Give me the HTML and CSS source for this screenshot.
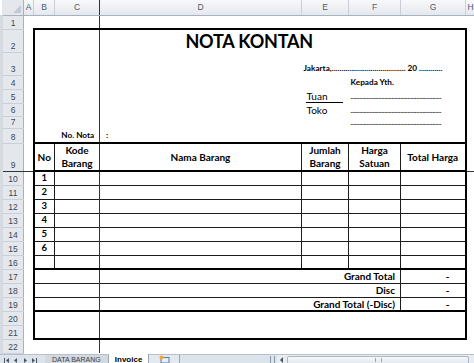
FILE: index.html
```html
<!DOCTYPE html>
<html lang="id">
<head>
  <meta charset="UTF-8" />
  <title>Invoice - Nota Kontan</title>
  <link rel="stylesheet" href="styles.css">
</head>
<body>
  <table class="sheet">
    <colgroup>
      <col class="c-rh"><col class="c-a"><col class="c-b"><col class="c-c"><col class="c-d">
      <col class="c-e"><col class="c-f"><col class="c-g"><col class="c-h">
    </colgroup>
    <tr class="r-head">
      <th class="corner"><span class="tri"></span></th>
      <th class="ch">A</th><th class="ch">B</th><th class="ch fz">C</th><th class="ch">D</th>
      <th class="ch">E</th><th class="ch">F</th><th class="ch">G</th><th class="ch">H</th>
    </tr>
    <tr class="r14">
      <th class="rn">1</th><td></td><td></td><td class="fz"></td><td></td><td></td><td></td><td></td><td></td>
    </tr>
    <tr class="r23 top-thick">
      <th class="rn">2</th><td></td><td class="t lft"></td><td class="t fz"></td>
      <td class="t rgt title" colspan="4">NOTA KONTAN</td><td></td>
    </tr>
    <tr class="r23">
      <th class="rn">3</th><td></td><td class="lft"></td><td class="fz"></td><td></td>
      <td class="rgt small" colspan="3">Jakarta,...................................... 20 ............</td><td></td>
    </tr>
    <tr class="r14">
      <th class="rn">4</th><td></td><td class="lft"></td><td class="fz"></td><td></td><td></td>
      <td class="rgt small kepada" colspan="2">Kepada Yth.</td><td></td>
    </tr>
    <tr class="r14">
      <th class="rn">5</th><td></td><td class="lft"></td><td class="fz"></td><td></td>
      <td class="field"><span class="under">Tuan</span></td>
      <td class="rgt leader" colspan="2">..............................................................</td><td></td>
    </tr>
    <tr class="r13">
      <th class="rn">6</th><td></td><td class="lft"></td><td class="fz"></td><td></td>
      <td class="field"><span class="plain">Toko</span></td>
      <td class="rgt leader" colspan="2">..............................................................</td><td></td>
    </tr>
    <tr class="r11">
      <th class="rn">7</th><td></td><td class="lft"></td><td class="fz"></td><td></td><td></td>
      <td class="rgt leader" colspan="2">..............................................................</td><td></td>
    </tr>
    <tr class="r15">
      <th class="rn">8</th><td></td><td class="lft"></td><td class="fz small nota">No. Nota</td>
      <td class="small colon">:</td><td></td><td></td><td class="rgt"></td><td></td>
    </tr>
    <tr class="r28 top-thick head-row">
      <th class="rn">9</th><td></td>
      <td class="t lft v hd">No</td>
      <td class="t fz hd">Kode<br>Barang</td>
      <td class="t v hd">Nama Barang</td>
      <td class="t v hd">Jumlah<br>Barang</td>
      <td class="t v hd">Harga<br>Satuan</td>
      <td class="t rgt hd">Total Harga</td><td></td>
    </tr>
    <tr class="r14">
      <th class="rn">10</th><td></td><td class="t lft v num">1</td><td class="t fz"></td>
      <td class="t v"></td><td class="t v"></td><td class="t v"></td><td class="t rgt"></td><td></td>
    </tr>
    <tr class="r14 top-thin">
      <th class="rn">11</th><td></td><td class="t lft v num">2</td><td class="t fz"></td>
      <td class="t v"></td><td class="t v"></td><td class="t v"></td><td class="t rgt"></td><td></td>
    </tr>
    <tr class="r14 top-thin">
      <th class="rn">12</th><td></td><td class="t lft v num">3</td><td class="t fz"></td>
      <td class="t v"></td><td class="t v"></td><td class="t v"></td><td class="t rgt"></td><td></td>
    </tr>
    <tr class="r14 top-thin">
      <th class="rn">13</th><td></td><td class="t lft v num">4</td><td class="t fz"></td>
      <td class="t v"></td><td class="t v"></td><td class="t v"></td><td class="t rgt"></td><td></td>
    </tr>
    <tr class="r14 top-thin">
      <th class="rn">14</th><td></td><td class="t lft v num">5</td><td class="t fz"></td>
      <td class="t v"></td><td class="t v"></td><td class="t v"></td><td class="t rgt"></td><td></td>
    </tr>
    <tr class="r14 top-thin">
      <th class="rn">15</th><td></td><td class="t lft v num">6</td><td class="t fz"></td>
      <td class="t v"></td><td class="t v"></td><td class="t v"></td><td class="t rgt"></td><td></td>
    </tr>
    <tr class="r14 top-thin">
      <th class="rn">16</th><td></td><td class="t lft v"></td><td class="t fz"></td>
      <td class="t v"></td><td class="t v"></td><td class="t v"></td><td class="t rgt"></td><td></td>
    </tr>
    <tr class="r14 top-thick">
      <th class="rn">17</th><td></td><td class="t lft"></td><td class="t fz"></td>
      <td class="t v lbl" colspan="3">Grand Total</td><td class="t rgt dash">-</td><td></td>
    </tr>
    <tr class="r14 top-thin">
      <th class="rn">18</th><td></td><td class="t lft"></td><td class="t fz"></td>
      <td class="t v lbl" colspan="3">Disc</td><td class="t rgt dash">-</td><td></td>
    </tr>
    <tr class="r14 top-thin">
      <th class="rn">19</th><td></td><td class="t lft"></td><td class="t fz"></td>
      <td class="t v lbl" colspan="3">Grand Total (-Disc)</td><td class="t rgt dash">-</td><td></td>
    </tr>
    <tr class="r14 top-thick">
      <th class="rn">20</th><td></td><td class="t lft"></td><td class="t fz"></td>
      <td class="t rgt" colspan="4"></td><td></td>
    </tr>
    <tr class="r14 bottom-thick">
      <th class="rn">21</th><td></td><td class="t lft"></td><td class="t fz"></td>
      <td class="t rgt" colspan="4"></td><td></td>
    </tr>
    <tr class="r14">
      <th class="rn">22</th><td></td><td></td><td class="fz"></td><td></td><td></td><td></td><td></td><td></td>
    </tr>
  </table>

  <div class="tabbar">
    <div class="nav">
      <svg width="38" height="9" viewBox="0 0 38 9">
        <g fill="#4a5566">
          <rect x="1" y="2" width="1" height="5"/>
          <path d="M6 2 L3 4.5 L6 7 Z"/>
          <path d="M14 2 L11 4.5 L14 7 Z"/>
          <path d="M21 2 L24 4.5 L21 7 Z"/>
          <path d="M29 2 L32 4.5 L29 7 Z"/>
          <rect x="33" y="2" width="1" height="5"/>
        </g>
      </svg>
    </div>
    <div class="tab">DATA BARANG</div>
    <div class="tab active">Invoice</div>
    <div class="tab newtab">
      <svg width="14" height="9" viewBox="0 0 14 9">
        <rect x="4" y="2.5" width="8" height="5.5" fill="#e8eef7" stroke="#5b7aa6" stroke-width="1"/>
        <circle cx="4.5" cy="2.5" r="2" fill="#f0a830"/>
      </svg>
    </div>
    <div class="gap"></div>
    <div class="split"></div>
    <div class="hscroll">
      <span class="arrow"></span>
      <div class="thumb"><span class="grip"></span></div>
    </div>
  </div>
</body>
</html>
```

FILE: styles.css
```css
body {
  margin: 0;
  background-color: #fff;
  font-family: Lato, 'Liberation Sans', sans-serif;
  color: #000;
  overflow: hidden;
}

.sheet {
  border-collapse: collapse;
  table-layout: fixed;
  width: 474px;
}
.sheet td,
.sheet th {
  padding: 0;
  overflow: hidden;
  white-space: nowrap;
  vertical-align: bottom;
  line-height: 10px;
}
.c-rh { width: 22px; }
.c-a { width: 10px; }
.c-b { width: 21px; }
.c-c { width: 45px; }
.c-d { width: 202px; }
.c-e { width: 47px; }
.c-f { width: 52px; }
.c-g { width: 65px; }
.c-h { width: 10px; }

.r-head { height: 15px; }
.r11 { height: 11px; }
.r13 { height: 13px; }
.r14 { height: 14px; }
.r15 { height: 15px; }
.r23 { height: 23px; }
.r28 { height: 28px; }

/* column + row headers */
.ch {
  background: linear-gradient(#f7f8fa, #e4e8ed);
  border-right: 1px solid #c8cfd8;
  border-bottom: 1px solid #a7b2c0;
  color: #4d5a6a;
  font-family: 'Liberation Sans', sans-serif;
  font-weight: normal;
  font-size: 8.5px;
  vertical-align: middle !important;
}
.corner {
  background: #e4e8ed;
  border-right: 1px solid #a7b2c0;
  border-bottom: 1px solid #a7b2c0;
  position: relative;
}
.tri {
  position: absolute;
  right: 2px;
  bottom: 2px;
  border-left: 8px solid transparent;
  border-bottom: 8px solid #c3cad3;
}
.sheet th.rn {
  background: #e4e8ed;
  border-left: 3px solid #d5dae1;
  border-right: 1px solid #a7b2c0;
  border-bottom: 1px solid #c8cfd8;
  color: #3c4654;
  font-family: 'Liberation Sans', sans-serif;
  font-weight: normal;
  font-size: 8.5px;
  padding-bottom: 1px;
}

/* frozen pane line */
.sheet .fz { border-right: 1px solid #333; }
.head-row th.rn,
.head-row td { border-bottom: 1px solid #333; }

/* invoice borders */
.sheet td.lft { border-left: 2px solid #000; }
.sheet td.rgt { border-right: 2px solid #000; }
.sheet td.v { border-right: 1px solid #1c1c1c; }
.top-thick td.t { border-top: 2px solid #000; }
.top-thin td.t { border-top: 1px solid #1c1c1c; }
.head-row td.t { border-bottom: 2px solid #000; }
.bottom-thick td.t { border-bottom: 2px solid #000; }

/* texts */
.title {
  text-align: center;
  padding-right: 66px !important;
  font-size: 18px;
  font-weight: bold;
  letter-spacing: -0.2px;
  line-height: 20px !important;
  vertical-align: middle !important;
}
.small {
  font-size: 8.2px;
  font-weight: bold;
  padding-left: 2px !important;
  padding-bottom: 2px !important;
}
.kepada { padding-left: 2px !important; }
.field {
  font-size: 10px;
  line-height: 11px !important;
}
.under {
  display: block;
  margin: 0 6px 0 4px;
  padding-left: 1px;
  border-bottom: 1px solid #000;
}
.plain {
  display: block;
  padding-left: 5px;
}
.leader {
  font-size: 7px;
  font-weight: bold;
  letter-spacing: -0.2px;
  padding-left: 2px !important;
  color: #222;
  vertical-align: middle !important;
}
.nota {
  text-align: center;
  padding-bottom: 2px !important;
}
.colon { padding-left: 6px !important; }
.hd {
  text-align: center;
  vertical-align: middle !important;
  font-size: 10px;
  font-weight: bold;
  line-height: 13px !important;
}
.num {
  text-align: center;
  vertical-align: middle !important;
  font-size: 9.5px;
  font-weight: bold;
}
.lbl {
  text-align: right;
  padding-right: 5px !important;
  font-size: 10px;
  font-weight: bold;
  vertical-align: middle !important;
}
.dash {
  text-align: right;
  padding-right: 15px !important;
  font-size: 10px;
  font-weight: bold;
  vertical-align: middle !important;
}

/* sheet tabs + scroll bar */
.tabbar {
  display: flex;
  align-items: stretch;
  height: 11px;
  background: #dde3ea;
  border-top: 1px solid #b7c1cd;
  font-family: 'Liberation Sans', sans-serif;
}
.nav {
  width: 42px;
  padding-left: 3px;
  display: flex;
  align-items: center;
}
.tab {
  display: flex;
  align-items: center;
  padding: 0 7px;
  font-size: 7px;
  color: #3b3f46;
  background: #d3d9e1;
  border-right: 1px solid #9aa6b6;
  border-bottom: 1px solid #9aa6b6;
}
.tab.active {
  background: #fff;
  color: #000;
  font-weight: bold;
  font-size: 8px;
  padding: 0 6px;
  margin-top: -1px;
}
.tab.newtab {
  padding: 0 8px;
  background: #e4e9ef;
}
.gap { flex: 1; }
.split {
  width: 3px;
  margin: 1px 2px;
  border-left: 1px solid #8a97a8;
  border-right: 1px solid #8a97a8;
}
.hscroll {
  width: 197px;
  display: flex;
  align-items: center;
  background: #e9edf1;
}
.arrow {
  width: 0;
  height: 0;
  margin: 0 4px 0 3px;
  border-top: 3px solid transparent;
  border-bottom: 3px solid transparent;
  border-right: 3px solid #4a5566;
}
.thumb {
  width: 182px;
  height: 9px;
  display: flex;
  justify-content: center;
  align-items: center;
  background: linear-gradient(#f7f9fb, #dfe5ec);
  border: 1px solid #a9b5c3;
  border-radius: 2px;
  box-sizing: border-box;
}
.grip {
  width: 5px;
  height: 4px;
  border-left: 1px solid #9aa6b6;
  border-right: 1px solid #9aa6b6;
}
```
